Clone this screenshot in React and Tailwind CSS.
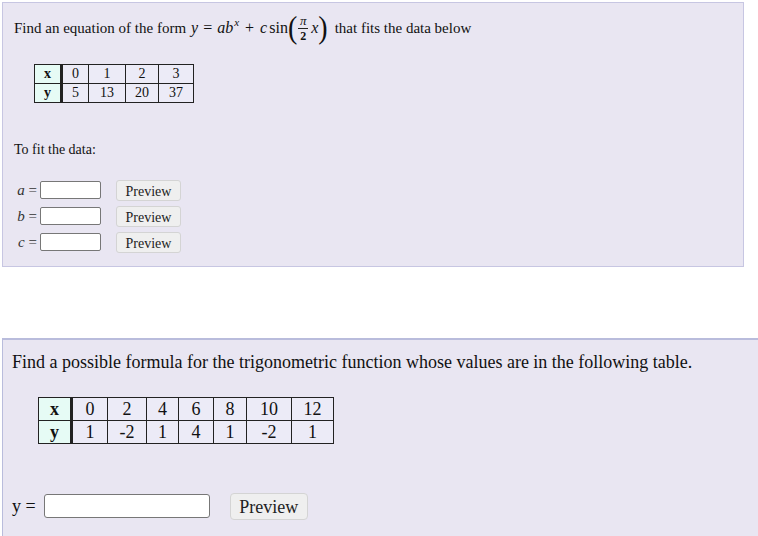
import React from 'react';

const serif = { fontFamily: '"Liberation Serif", "DejaVu Serif", serif' };

function DataTable({ xs, ys, widths, size }) {
  const big = size === 'lg';
  const cell = big ? 'h-[23px] text-[18px] leading-none' : 'h-[19px] text-[14px] leading-none';
  const head = 'bg-[#e6fbf5] font-bold border border-[#222] border-r-[3px]';
  const data = 'bg-[#ecebf7] border border-[#222] text-center';
  return (
    <table className="border-collapse border border-[#222]" style={serif}>
      <tbody>
        <tr>
          <td className={`${head} ${cell} text-center`} style={{ width: widths[0] }}>x</td>
          {xs.map((v, i) => (
            <td key={i} className={`${data} ${cell}`} style={{ width: widths[i + 1] }}>{v}</td>
          ))}
        </tr>
        <tr>
          <td className={`${head} ${cell} text-center`}>y</td>
          {ys.map((v, i) => (
            <td key={i} className={`${data} ${cell}`}>{v}</td>
          ))}
        </tr>
      </tbody>
    </table>
  );
}

function Formula() {
  return (
    <span className="inline-flex items-center ml-[5px] mr-[7px] text-[16px]" style={serif}>
      <i>y</i>
      <span className="mx-[5px]">=</span>
      <i>ab</i>
      <i className="text-[11px] relative -top-[6px] ml-[1px]">x</i>
      <span className="mx-[6px]">+</span>
      <i>c</i>
      <span className="ml-[2px]">sin</span>
      <span className="text-[28px] leading-none font-light scale-y-110">(</span>
      <span className="inline-flex flex-col items-center leading-none text-[13px] mx-[1px]">
        <i className="pb-[1px]">π</i>
        <span className="w-[10px] border-t border-[#222]" />
        <span className="pt-[1px] font-bold text-[12px]">2</span>
      </span>
      <i className="ml-[2px]">x</i>
      <span className="text-[28px] leading-none font-light scale-y-110">)</span>
    </span>
  );
}

function SmallRow({ label }) {
  return (
    <div className="flex items-center h-[26px]">
      <div className="w-[26px] text-right pr-[3px] text-[15px] text-[#333]">
        <i>{label}</i> =
      </div>
      <input className="w-[61px] h-[18px] bg-white border border-[#777] rounded-[2px]" />
      <button className="ml-[15px] w-[65px] h-[21px] bg-[#efefef] border border-[#d4d4d4] rounded-[3px] text-[14px] text-[#222]">
        Preview
      </button>
    </div>
  );
}

export default function App() {
  return (
    <div className="w-[758px] h-[536px] bg-white overflow-hidden text-[#111]" style={serif}>
      <div className="mt-[2px] ml-[2px] w-[742px] bg-[#e9e6f2] border border-[#c7c6e2] pl-[11px] pt-[8px] pb-[11px]">
        <div className="flex items-center h-[34px] text-[15px]">
          <span>Find an equation of the form</span>
          <Formula />
          <span>that fits the data below</span>
        </div>
        <div className="mt-[19px] ml-[20px]">
          <DataTable xs={[0, 1, 2, 3]} ys={[5, 13, 20, 37]} widths={[27, 27, 37, 33, 35]} />
        </div>
        <div className="mt-[38px] h-[18px] text-[14px] leading-[18px]">To fit the data:</div>
        <div className="mt-[18px] flex flex-col">
          <SmallRow label="a" />
          <SmallRow label="b" />
          <SmallRow label="c" />
        </div>
      </div>

      <div className="mt-[71px] ml-[2px] bg-[#e9e6f2] border-t-2 border-l border-[#b9bcdc] pl-[9px] pt-[11px] h-[200px]">
        <div className="text-[18px] leading-[22px]">
          Find a possible formula for the trigonometric function whose values are in the following table.
        </div>
        <div className="mt-[24px] ml-[26px]">
          <DataTable
            size="lg"
            xs={[0, 2, 4, 6, 8, 10, 12]}
            ys={[1, -2, 1, 4, 1, -2, 1]}
            widths={[33, 36, 39, 32, 35, 33, 45, 42]}
          />
        </div>
        <div className="mt-[48px] flex items-center h-[28px]">
          <span className="text-[18px] mr-[8px]">y =</span>
          <input className="w-[166px] h-[24px] bg-white border border-[#777] rounded-[3px]" />
          <button className="ml-[20px] w-[78px] h-[27px] bg-[#efefef] border border-[#d4d4d4] rounded-[4px] text-[18px] text-[#222]">
            Preview
          </button>
        </div>
      </div>
    </div>
  );
}
